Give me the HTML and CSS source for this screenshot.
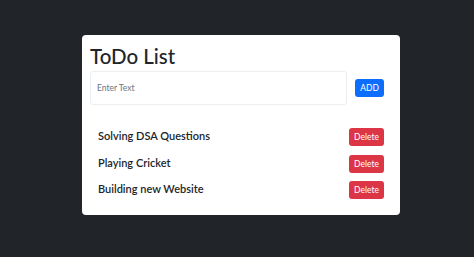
FILE: index.html
```html
<!DOCTYPE html>
<html>
<head>
<meta charset="utf-8">
<link rel="stylesheet" href="styles.css">
</head>
<body>
<div class="card">
  <h1 class="title">ToDo List</h1>
  <div class="entry">
    <input class="text-input" type="text" placeholder="Enter Text">
    <button class="btn btn-add">ADD</button>
  </div>
  <ul class="list">
    <li class="item"><span class="item-text">Solving DSA Questions</span><button class="btn btn-del">Delete</button></li>
    <li class="item"><span class="item-text">Playing Cricket</span><button class="btn btn-del">Delete</button></li>
    <li class="item"><span class="item-text">Building new Website</span><button class="btn btn-del">Delete</button></li>
  </ul>
</div>
</body>
</html>
```
FILE: styles.css
```css
html, body {
  margin: 0;
  padding: 0;
  background: #212529;
  height: 100%;
}
body {
  font-family: "Lato", "Open Sans", sans-serif;
  color: #212529;
  padding-top: 35px;
  box-sizing: border-box;
}
.card {
  margin-left: 82px;
  width: 318px;
  height: 180px;
  background: #fff;
  border-radius: 4px;
  box-sizing: border-box;
  padding: 7px 16px 0 8px;
}
.title {
  margin: 0;
  font-size: 20.5px;
  font-weight: 500;
  line-height: 28px;
  color: #212529;
}
.entry {
  display: flex;
  align-items: center;
  gap: 8px;
  margin-top: 1px;
}
.text-input {
  width: 257px;
  height: 34px;
  box-sizing: border-box;
  border: 1px solid #eceff1;
  border-radius: 3px;
  padding: 0 6px;
  font-family: "Lato", sans-serif;
  font-size: 8.5px;
  outline: none;
}
.text-input::placeholder {
  color: #6c757d;
}
.btn {
  border: none;
  border-radius: 3px;
  color: #fff;
  font-family: "Lato", sans-serif;
  font-size: 8.5px;
  padding: 0;
  cursor: pointer;
}
.btn-add {
  width: 29px;
  height: 18px;
  background: #0d6efd;
}
.list {
  list-style: none;
  margin: 23px 0 0 0;
  padding: 0 0 0 8px;
}
.item {
  display: flex;
  align-items: center;
  justify-content: space-between;
  height: 18px;
  margin-bottom: 8.5px;
}
.item-text {
  font-size: 11px;
  font-weight: 600;
  color: #212529;
  padding-bottom: 3px;
}
.btn-del {
  width: 35px;
  height: 18px;
  background: #dc3545;
}
```
